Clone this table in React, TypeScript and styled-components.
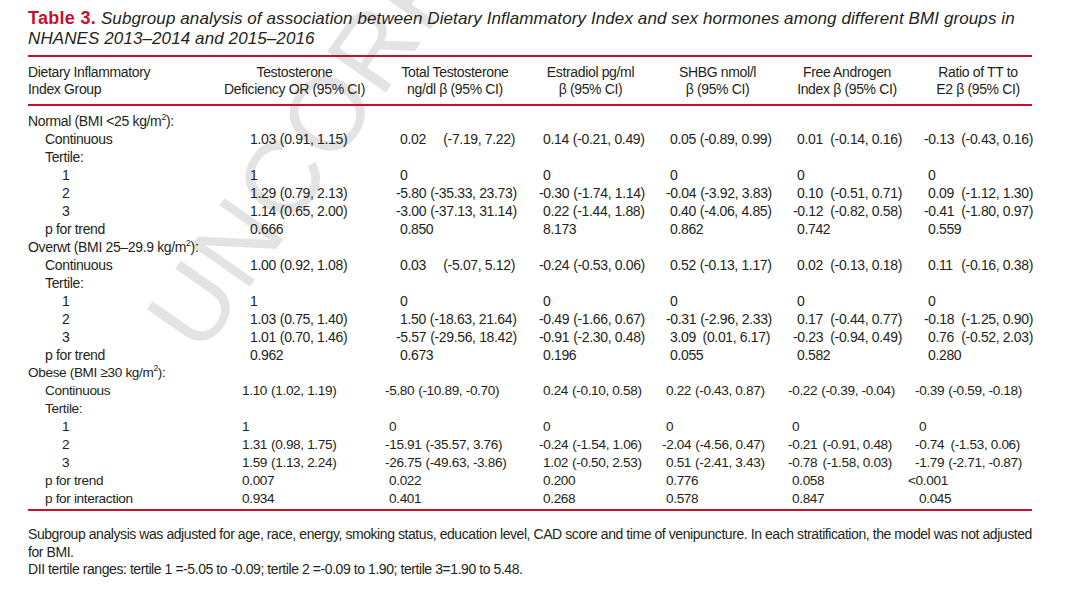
import { ReactNode } from 'react';
import styled, { createGlobalStyle } from 'styled-components';

const GlobalStyle = createGlobalStyle`
    html, body {
        margin: 0;
        padding: 0;
        background: #ffffff;
    }
    body {
        font-family: "Liberation Sans", Arial, sans-serif;
        color: #231f20;
    }
`;

const RED = '#c8102e';

const Page = styled.div`
    position: relative;
    width: 1076px;
    height: 589px;
    overflow: hidden;
    padding: 0 0 0 28px;
    box-sizing: border-box;
`;

const Watermark = styled.div`
    position: absolute;
    left: 214px;
    top: 262px;
    font-size: 104px;
    line-height: 1;
    letter-spacing: 2px;
    color: #e3e3e3;
    white-space: nowrap;
    transform: rotate(-55deg);
    transform-origin: left bottom;
    z-index: 0;
    pointer-events: none;
`;

const Content = styled.div`
    position: relative;
    z-index: 1;
    width: 1004px;
`;

const Title = styled.div`
    font-style: italic;
    font-size: 17px;
    line-height: 20px;
    letter-spacing: 0.1px;
    padding-top: 8px;
    white-space: nowrap;
`;

const TitleLabel = styled.span`
    font-style: normal;
    font-weight: bold;
    font-size: 18px;
    letter-spacing: 0.3px;
    color: ${RED};
`;

const Rule = styled.div<{ $gap: number }>`
    height: 2px;
    background: ${RED};
    margin-top: ${p => p.$gap}px;
`;

const HeadRow = styled.div<{ $template: string }>`
    display: grid;
    grid-template-columns: ${p => p.$template};
    padding: 7px 0 6px;
    font-size: 14px;
    line-height: 17px;
    letter-spacing: -0.35px;
`;

const HeadCell = styled.div<{ $col: number }>`
    grid-column: ${p => p.$col === 0 ? 1 : p.$col * 2};
    display: flex;
    flex-direction: column;
    align-items: ${p => p.$col === 0 ? 'flex-start' : 'center'};
    padding-right: ${p => p.$col === 0 ? 0 : 5}px;
    white-space: nowrap;
`;

const Body = styled.div`
    padding: 6px 0 1px;
`;

const Row = styled.div<{ $template: string; $size: number }>`
    display: grid;
    grid-template-columns: ${p => p.$template};
    height: 18px;
    line-height: 18px;
    font-size: ${p => p.$size}px;
    letter-spacing: -0.35px;
    white-space: nowrap;
`;

const Label = styled.div<{ $indent: number }>`
    grid-column: 1;
    padding-left: ${p => p.$indent * 17}px;
`;

const Value = styled.div<{ $col: number }>`
    grid-column: ${p => p.$col * 2};
    display: flex;
    justify-content: space-between;
    gap: 4px;
`;

const Sign = styled.span<{ $hang: number }>`
    margin-left: ${p => -p.$hang}px;
`;

const Notes = styled.div`
    margin-top: 15px;
    font-size: 14px;
    line-height: 17.5px;
    letter-spacing: -0.43px;
    white-space: nowrap;
`;

type Cell = string | [string, string];

interface DataRow {
    label: ReactNode;
    indent: number;
    cells?: Cell[];
}

interface Layout {
    cols: [number, number][];
    size: number;
}

interface Section {
    layout: Layout;
    rows: DataRow[];
}

const normalLayout: Layout = {
    cols: [[250, 344], [400, 515], [543, 643], [670, 770], [797, 902], [928, 1033]],
    size: 14,
};

const obeseLayout: Layout = {
    cols: [[242, 334], [389, 499], [543, 639], [666, 763], [792, 892], [919, 1020]],
    size: 13.6,
};

const toTemplate = (layout: Layout) => {
    const parts = [`${layout.cols[0][0] - 28}px`];
    layout.cols.forEach(([start, end], i) => {
        parts.push(`${end - start}px`);
        const next = layout.cols[i + 1];
        if (next) parts.push(`${next[0] - end}px`);
    });
    return parts.join(' ');
};

const zeros: Cell[] = ['0', '0', '0', '0', '0'];

const Sup2 = () => <sup style={{ fontSize: '0.62em', lineHeight: 0 }}>2</sup>;

const sections: Section[] = [
    {
        layout: normalLayout,
        rows: [
            { label: <>Normal (BMI &lt;25 kg/m<Sup2 />):</>, indent: 0 },
            { label: 'Continuous', indent: 1, cells: [['1.03', '(0.91, 1.15)'], ['0.02', '(-7.19, 7.22)'], ['0.14', '(-0.21, 0.49)'], ['0.05', '(-0.89, 0.99)'], ['0.01', '(-0.14, 0.16)'], ['-0.13', '(-0.43, 0.16)']] },
            { label: 'Tertile:', indent: 1 },
            { label: '1', indent: 2, cells: ['1', ...zeros] },
            { label: '2', indent: 2, cells: [['1.29', '(0.79, 2.13)'], ['-5.80', '(-35.33, 23.73)'], ['-0.30', '(-1.74, 1.14)'], ['-0.04', '(-3.92, 3.83)'], ['0.10', '(-0.51, 0.71)'], ['0.09', '(-1.12, 1.30)']] },
            { label: '3', indent: 2, cells: [['1.14', '(0.65, 2.00)'], ['-3.00', '(-37.13, 31.14)'], ['0.22', '(-1.44, 1.88)'], ['0.40', '(-4.06, 4.85)'], ['-0.12', '(-0.82, 0.58)'], ['-0.41', '(-1.80, 0.97)']] },
            { label: 'p for trend', indent: 1, cells: ['0.666', '0.850', '8.173', '0.862', '0.742', '0.559'] },
            { label: <>Overwt (BMI 25–29.9 kg/m<Sup2 />):</>, indent: 0 },
            { label: 'Continuous', indent: 1, cells: [['1.00', '(0.92, 1.08)'], ['0.03', '(-5.07, 5.12)'], ['-0.24', '(-0.53, 0.06)'], ['0.52', '(-0.13, 1.17)'], ['0.02', '(-0.13, 0.18)'], ['0.11', '(-0.16, 0.38)']] },
            { label: 'Tertile:', indent: 1 },
            { label: '1', indent: 2, cells: ['1', ...zeros] },
            { label: '2', indent: 2, cells: [['1.03', '(0.75, 1.40)'], ['1.50', '(-18.63, 21.64)'], ['-0.49', '(-1.66, 0.67)'], ['-0.31', '(-2.96, 2.33)'], ['0.17', '(-0.44, 0.77)'], ['-0.18', '(-1.25, 0.90)']] },
            { label: '3', indent: 2, cells: [['1.01', '(0.70, 1.46)'], ['-5.57', '(-29.56, 18.42)'], ['-0.91', '(-2.30, 0.48)'], ['3.09', '(0.01, 6.17)'], ['-0.23', '(-0.94, 0.49)'], ['0.76', '(-0.52, 2.03)']] },
            { label: 'p for trend', indent: 1, cells: ['0.962', '0.673', '0.196', '0.055', '0.582', '0.280'] },
        ],
    },
    {
        layout: obeseLayout,
        rows: [
            { label: <>Obese (BMI ≥30 kg/m<Sup2 />):</>, indent: 0 },
            { label: 'Continuous', indent: 1, cells: [['1.10', '(1.02, 1.19)'], ['-5.80', '(-10.89, -0.70)'], ['0.24', '(-0.10, 0.58)'], ['0.22', '(-0.43, 0.87)'], ['-0.22', '(-0.39, -0.04)'], ['-0.39', '(-0.59, -0.18)']] },
            { label: 'Tertile:', indent: 1 },
            { label: '1', indent: 2, cells: ['1', ...zeros] },
            { label: '2', indent: 2, cells: [['1.31', '(0.98, 1.75)'], ['-15.91', '(-35.57, 3.76)'], ['-0.24', '(-1.54, 1.06)'], ['-2.04', '(-4.56, 0.47)'], ['-0.21', '(-0.91, 0.48)'], ['-0.74', '(-1.53, 0.06)']] },
            { label: '3', indent: 2, cells: [['1.59', '(1.13, 2.24)'], ['-26.75', '(-49.63, -3.86)'], ['1.02', '(-0.50, 2.53)'], ['0.51', '(-2.41, 3.43)'], ['-0.78', '(-1.58, 0.03)'], ['-1.79', '(-2.71, -0.87)']] },
            { label: 'p for trend', indent: 1, cells: ['0.007', '0.022', '0.200', '0.776', '0.058', '<0.001'] },
            { label: 'p for interaction', indent: 1, cells: ['0.934', '0.401', '0.268', '0.578', '0.847', '0.045'] },
        ],
    },
];

const headers: [string, string][] = [
    ['Testosterone', 'Deficiency OR (95% CI)'],
    ['Total Testosterone', 'ng/dl β (95% CI)'],
    ['Estradiol pg/ml', 'β (95% CI)'],
    ['SHBG nmol/l', 'β (95% CI)'],
    ['Free Androgen', 'Index β (95% CI)'],
    ['Ratio of TT to', 'E2 β (95% CI)'],
];

const Estimate = ({ value }: { value: string }) => {
    const first = value[0];
    if (first === '-') return <span><Sign $hang={4}>-</Sign>{value.slice(1)}</span>;
    if (first === '<') return <span><Sign $hang={11}>&lt;</Sign>{value.slice(1)}</span>;
    return <span>{value}</span>;
};

export default function App() {
    const headTemplate = toTemplate(normalLayout);
    return (
        <Page>
            <GlobalStyle />
            <Watermark>UNCORRECTED PROOF</Watermark>
            <Content>
                <Title>
                    <TitleLabel>Table 3.</TitleLabel> Subgroup analysis of association between Dietary Inflammatory Index and sex hormones among different BMI groups in
                    <br />
                    NHANES 2013–2014 and 2015–2016
                </Title>
                <Rule $gap={6} />
                <HeadRow $template={headTemplate}>
                    <HeadCell $col={0}>
                        <span>Dietary Inflammatory</span>
                        <span>Index Group</span>
                    </HeadCell>
                    {headers.map((h, i) => (
                        <HeadCell key={h[0]} $col={i + 1}>
                            <span>{h[0]}</span>
                            <span>{h[1]}</span>
                        </HeadCell>
                    ))}
                </HeadRow>
                <Rule $gap={0} />
                <Body>
                    {sections.map((section, si) => {
                        const template = toTemplate(section.layout);
                        return section.rows.map((row, ri) => (
                            <Row key={`${si}-${ri}`} $template={template} $size={section.layout.size}>
                                <Label $indent={row.indent}>{row.label}</Label>
                                {row.cells?.map((cell, ci) => (
                                    <Value key={ci} $col={ci + 1}>
                                        {typeof cell === 'string'
                                            ? <Estimate value={cell} />
                                            : <><Estimate value={cell[0]} /><span>{cell[1]}</span></>}
                                    </Value>
                                ))}
                            </Row>
                        ));
                    })}
                </Body>
                <Rule $gap={0} />
                <Notes>
                    Subgroup analysis was adjusted for age, race, energy, smoking status, education level, CAD score and time of venipuncture. In each stratification, the model was not adjusted
                    <br />
                    for BMI.
                    <br />
                    DII tertile ranges: tertile 1 =-5.05 to -0.09; tertile 2 =-0.09 to 1.90; tertile 3=1.90 to 5.48.
                </Notes>
            </Content>
        </Page>
    );
}
